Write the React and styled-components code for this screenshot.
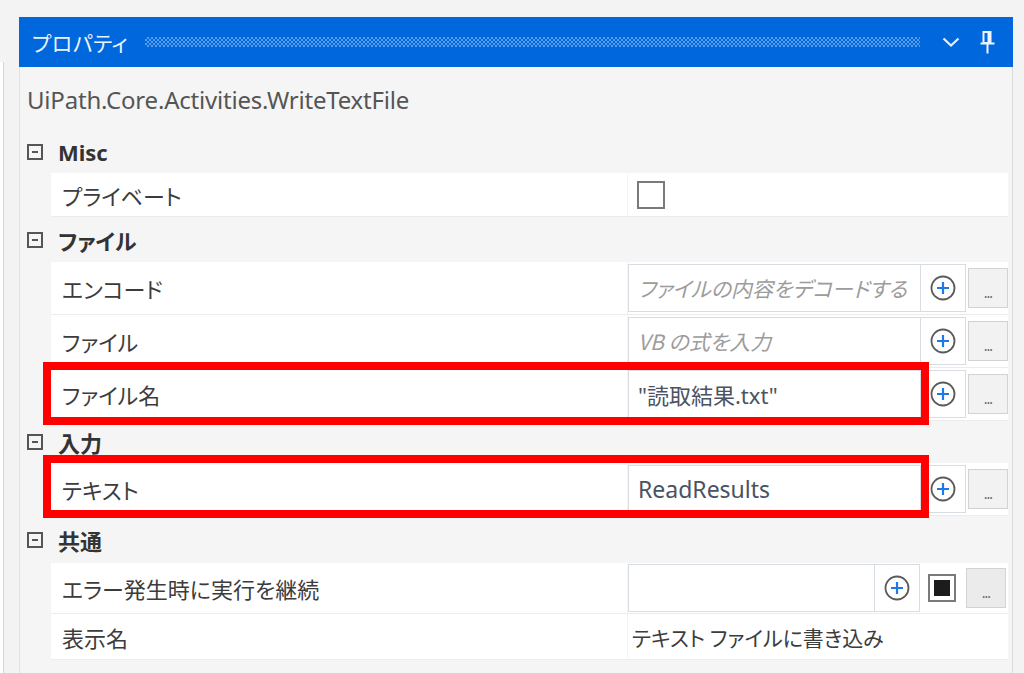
import React from "react";
import styled, { createGlobalStyle } from "styled-components";

const GlobalStyle = createGlobalStyle`
  html, body {
    margin: 0;
    padding: 0;
    background: #f3f3f3;
  }
  body {
    font-family: "Noto Sans", "Noto Sans CJK JP", sans-serif;
    color: #3a3a3a;
  }
`;

const Page = styled.div`
  display: flex;
  height: 673px;
  overflow: hidden;
  background: #f3f3f3;
`;

const SidePanel = styled.div`
  width: 3px;
  margin-top: 62px;
  background: #fff;
  border-right: 1px solid #d6d6d6;
`;

const Panel = styled.div`
  margin: 17px 0 0 15px;
  width: 994px;
  display: flex;
  flex-direction: column;
`;

const Header = styled.div`
  height: 50px;
  flex-shrink: 0;
  background: #0068dc;
  display: flex;
  align-items: center;
  padding: 0 18px 0 13px;
  color: #fff;
`;

const HeaderTitle = styled.span`
  font-family: "Noto Sans CJK JP", sans-serif;
  font-size: 21px;
  font-feature-settings: "palt";
  letter-spacing: 0.5px;
  opacity: 0.92;
`;

const Grip = styled.div`
  flex: 1;
  height: 10px;
  margin: 0 22px 0 17px;
  background: repeating-conic-gradient(rgba(255, 255, 255, 0.34) 0 25%, transparent 0 50%) 0 0 / 4px 4px;
`;

const HeaderIcons = styled.div`
  display: flex;
  align-items: center;
  gap: 20px;
`;

const Body = styled.div`
  flex: 1;
  background: #f5f5f5;
  border-left: 1px solid #e2e2e2;
  border-right: 1px solid #dcdcdc;
  padding-right: 4px;
`;

const Subtitle = styled.div`
  height: 64px;
  display: flex;
  align-items: center;
  padding-left: 7px;
  font-size: 24px;
  letter-spacing: -0.2px;
  color: #555;
`;

const Category = styled.div`
  height: ${(p) => p.h}px;
  display: flex;
  align-items: center;
  gap: 15px;
  padding-left: 7px;
  font-family: "Noto Sans", "Noto Sans CJK JP", sans-serif;
  font-feature-settings: "palt";
  font-weight: 700;
  font-size: 22px;
  color: #333;
`;

const Collapse = styled.span`
  width: 12px;
  height: 12px;
  border: 2px solid #555;
  display: flex;
  align-items: center;
  justify-content: center;
  &::after {
    content: "";
    width: 6px;
    height: 2px;
    background: #555;
  }
`;

const Row = styled.div`
  position: relative;
  display: grid;
  grid-template-columns: 576px 380px;
  column-gap: 1px;
  margin-left: 31px;
  height: ${(p) => p.h}px;
  box-sizing: border-box;
  border-bottom: 1px solid #ececec;
`;

const Label = styled.div`
  background: #fff;
  display: flex;
  align-items: center;
  padding-left: 11px;
  font-family: "Noto Sans CJK JP", sans-serif;
  font-feature-settings: "palt";
  font-size: 22px;
  color: #3c3c3c;
`;

const Value = styled.div`
  background: #fff;
  display: flex;
  align-items: center;
`;

const InputBox = styled.div`
  width: ${(p) => p.w || 293}px;
  height: 48px;
  box-sizing: border-box;
  border: 1px solid #d7dde3;
  display: flex;
  align-items: center;
  padding-left: 9px;
  font-family: "Noto Sans", "Noto Sans CJK JP", sans-serif;
  font-size: 23px;
  color: #4a5361;
  white-space: nowrap;
  overflow: hidden;
`;

const Placeholder = styled.span`
  font-family: "Noto Sans CJK JP", sans-serif;
  font-size: 21px;
  font-style: italic;
  color: #9c9c9c;
  font-feature-settings: "palt";
`;

const MixedText = styled.span`
  font-size: 22px;
`;

const PlusBox = styled.div`
  width: 45px;
  height: 48px;
  box-sizing: border-box;
  border: 1px solid #d7dde3;
  border-left: none;
  display: flex;
  align-items: center;
  justify-content: center;
`;

const Ellipsis = styled.div`
  width: 40px;
  height: 40px;
  margin-left: ${(p) => p.ml || 2}px;
  box-sizing: border-box;
  background: ${(p) => (p.dim ? "#ebebeb" : "#f2f2f2")};
  border: 1px solid #d3d3d3;
  display: flex;
  align-items: flex-end;
  justify-content: center;
  padding-bottom: 7px;
  font-family: "Noto Sans", sans-serif;
  font-size: 14px;
  line-height: 1;
  color: #666;
  letter-spacing: -1px;
`;

const CheckBox = styled.div`
  width: 28px;
  height: 28px;
  box-sizing: border-box;
  margin-left: ${(p) => p.ml}px;
  border: 2px solid #7a7a7a;
  background: #fff;
  padding: 4px;
  &::after {
    content: "";
    display: ${(p) => (p.checked ? "block" : "none")};
    width: 100%;
    height: 100%;
    background: #1c1c1c;
  }
`;

const PlainText = styled.span`
  padding-left: 4px;
  font-family: "Noto Sans CJK JP", sans-serif;
  font-feature-settings: "palt";
  font-size: 21px;
  color: #3c3c3c;
`;

const Highlight = styled.div`
  position: absolute;
  left: -8px;
  top: ${(p) => p.top}px;
  bottom: ${(p) => p.bottom}px;
  width: 886px;
  box-sizing: border-box;
  border: 8px solid #ff0000;
  pointer-events: none;
  z-index: 2;
`;

const PlusIcon = () => (
  <svg width="26" height="26" viewBox="0 0 26 26">
    <circle cx="13" cy="13" r="11.5" fill="none" stroke="#5a5a5a" strokeWidth="1.8" />
    <path d="M13 7v12M7 13h12" stroke="#1e78e6" strokeWidth="2.2" />
  </svg>
);

const ChevronIcon = () => (
  <svg width="18" height="10" viewBox="0 0 18 10">
    <path d="M1.5 1.5L9 8.5l7.5-7" fill="none" stroke="#e8f0fc" strokeWidth="2.2" />
  </svg>
);

const PinIcon = () => (
  <svg width="15" height="23" viewBox="0 0 15 23">
    <path d="M3.5 1h7v11h-7z" fill="none" stroke="#eef4fd" strokeWidth="2" />
    <path d="M9 1v11" stroke="#eef4fd" strokeWidth="3" />
    <path d="M0.5 12.5h14M7.5 12.5v10" stroke="#eef4fd" strokeWidth="2" />
  </svg>
);

const FieldValue = ({ children, width }) => (
  <Value>
    <InputBox w={width}>{children}</InputBox>
    <PlusBox>
      <PlusIcon />
    </PlusBox>
    <Ellipsis>...</Ellipsis>
  </Value>
);

const Section = ({ title, h }) => (
  <Category h={h}>
    <Collapse />
    {title}
  </Category>
);

export default function App() {
  return (
    <Page>
      <GlobalStyle />
      <SidePanel />
      <Panel>
        <Header>
          <HeaderTitle>プロパティ</HeaderTitle>
          <Grip />
          <HeaderIcons>
            <ChevronIcon />
            <PinIcon />
          </HeaderIcons>
        </Header>
        <Body>
          <Subtitle>UiPath.Core.Activities.WriteTextFile</Subtitle>

          <Section title="Misc" h={42} />
          <Row h={44}>
            <Label>プライベート</Label>
            <Value>
              <CheckBox ml={9} />
            </Value>
          </Row>

          <Section title="ファイル" h={45} />
          <Row h={53}>
            <Label>エンコード</Label>
            <FieldValue>
              <Placeholder>ファイルの内容をデコードする</Placeholder>
            </FieldValue>
          </Row>
          <Row h={53}>
            <Label>ファイル</Label>
            <FieldValue>
              <Placeholder>VB の式を入力</Placeholder>
            </FieldValue>
          </Row>
          <Row h={53}>
            <Label>ファイル名</Label>
            <FieldValue>
              <MixedText>"読取結果.txt"</MixedText>
            </FieldValue>
            <Highlight top={-6} bottom={-5} />
          </Row>

          <Section title="入力" h={42} />
          <Row h={53}>
            <Label>テキスト</Label>
            <FieldValue>ReadResults</FieldValue>
            <Highlight top={-8} bottom={-3} />
          </Row>

          <Section title="共通" h={47} />
          <Row h={51}>
            <Label>エラー発生時に実行を継続</Label>
            <Value>
              <InputBox w={247} />
              <PlusBox>
                <PlusIcon />
              </PlusBox>
              <CheckBox ml={8} checked />
              <Ellipsis ml={10} dim>
                ...
              </Ellipsis>
            </Value>
          </Row>
          <Row h={46}>
            <Label>表示名</Label>
            <Value>
              <PlainText>テキスト ファイルに書き込み</PlainText>
            </Value>
          </Row>
        </Body>
      </Panel>
    </Page>
  );
}
